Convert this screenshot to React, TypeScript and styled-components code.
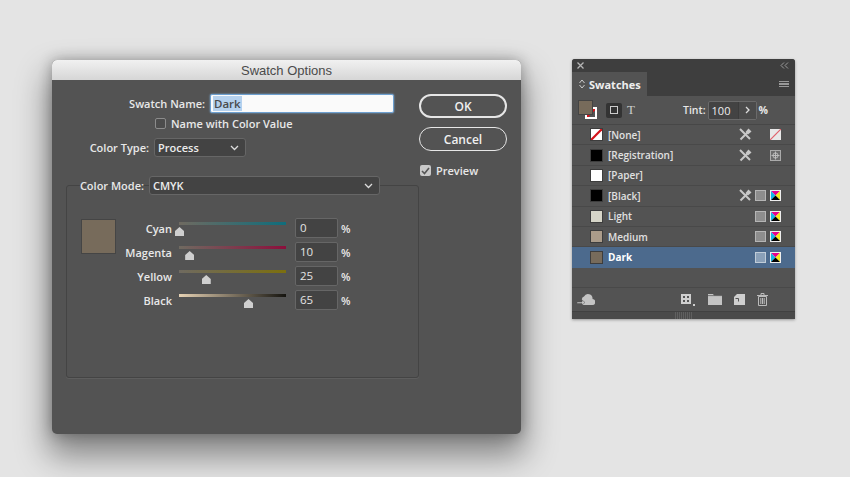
import styled, { createGlobalStyle } from 'styled-components';

const GlobalStyle = createGlobalStyle`
  html, body {
    margin: 0;
    height: 100%;
    background: #e4e4e4;
    overflow: hidden;
  }
  body {
    font-family: "Open Sans", "DejaVu Sans", sans-serif;
  }
`;

interface IChannel {
  name: string;
  value: number;
  thumb: number;
  track: string;
}

interface ISwatch {
  name: string;
  color: string;
  kind?: 'none' | 'plain';
  scissors?: boolean;
  mode?: 'none' | 'reg' | 'cmyk';
  spot?: boolean;
  selected?: boolean;
}

const channels: IChannel[] = [
  { name: 'Cyan', value: 0, thumb: 0, track: 'linear-gradient(90deg, #6f6a60, #0f6d7c)' },
  { name: 'Magenta', value: 10, thumb: 9.5, track: 'linear-gradient(90deg, #6f6a60, #8c0f3c)' },
  { name: 'Yellow', value: 25, thumb: 25, track: 'linear-gradient(90deg, #6f6a60, #7c6f0e)' },
  { name: 'Black', value: 65, thumb: 64.5, track: 'linear-gradient(90deg, #e6d2b4, #15140f)' },
];

const swatches: ISwatch[] = [
  { name: '[None]', color: '#fff', kind: 'none', scissors: true, mode: 'none' },
  { name: '[Registration]', color: '#000', scissors: true, mode: 'reg' },
  { name: '[Paper]', color: '#fff' },
  { name: '[Black]', color: '#000', scissors: true, spot: true, mode: 'cmyk' },
  { name: 'Light', color: '#d6d5c8', spot: true, mode: 'cmyk' },
  { name: 'Medium', color: '#ab9c8a', spot: true, mode: 'cmyk' },
  { name: 'Dark', color: '#776b5b', spot: true, mode: 'cmyk', selected: true },
];

const Chevron = () => (
  <svg width="9" height="6" viewBox="0 0 9 6">
    <path d="M1 1l3.5 3.5L8 1" fill="none" stroke="#ddd" strokeWidth="1.3" />
  </svg>
);

const ScissorsIcon = () => (
  <svg width="13" height="13" viewBox="0 0 13 13">
    <path d="M1 1l10 10M10 3L1.500 11.500" stroke="#c8c8c8" strokeWidth="2" fill="none" />
    <path d="M6.500 4l3-3.500 3 3-3.500 3z" fill="#c8c8c8" />
  </svg>
);

const CmykIcon = () => (
  <svg width="11" height="11" viewBox="0 0 11 11">
    <rect width="11" height="11" fill="#eee" />
    <path d="M1 1h9L5.500 5.500z" fill="#e5008c" />
    <path d="M1 1v9l4.500-4.500z" fill="#12b5e8" />
    <path d="M10 1v9L5.500 5.500z" fill="#f6ea1a" />
    <path d="M1 10h9L5.500 5.500z" fill="#000" />
  </svg>
);

const RegIcon = () => (
  <svg width="11" height="11" viewBox="0 0 11 11">
    <rect x="0.5" y="0.5" width="10" height="10" fill="#6a6a6a" stroke="#aaa" />
    <circle cx="5.500" cy="5.500" r="2.600" fill="none" stroke="#bbb" />
    <path d="M5.500 1.500v8M1.500 5.500h8" stroke="#bbb" />
  </svg>
);

const NoneIcon = () => (
  <svg width="11" height="11" viewBox="0 0 11 11">
    <rect width="11" height="11" fill="#e8e8e8" />
    <path d="M0 11L11 0" stroke="#e0606a" strokeWidth="1.200" />
  </svg>
);

const CloudIcon = () => (
  <svg width="18" height="14" viewBox="0 0 18 14">
    <path d="M6 12h9a3 3 0 0 0 .5-6A4.500 4.500 0 0 0 7 3.500 3 3 0 0 0 5 7z" fill="#c4c4c4" />
    <path d="M0 9h5V7l3 2.500L5 12v-1.500H0z" fill="#c4c4c4" stroke="#535353" strokeWidth="0.5" />
  </svg>
);

const GroupIcon = () => (
  <svg width="15" height="14" viewBox="0 0 15 14">
    <rect width="10" height="10" y="1" fill="#cfcfcf" />
    <path d="M2 3h2v2H2zM6 3h2v2H6zM2 7h2v2H2zM6 7h2v2H6z" fill="#555" />
    <rect x="12" y="11" width="2" height="2" fill="#cfcfcf" />
  </svg>
);

const FolderIcon = () => (
  <svg width="14" height="11" viewBox="0 0 14 11">
    <path d="M0 0h5l1 1.500h8V11H0z" fill="#c4c4c4" />
    <path d="M0 1.600h14" stroke="#555" strokeWidth="0.7" />
  </svg>
);

const NewIcon = () => (
  <svg width="11" height="11" viewBox="0 0 11 11">
    <path d="M3 0h8v11H0V3z" fill="#cfcfcf" />
    <path d="M1.500 4.500h3v3" fill="none" stroke="#555" />
  </svg>
);

const TrashIcon = () => (
  <svg width="11" height="13" viewBox="0 0 11 13">
    <path d="M0 2.500h11M4 2V.5h3V2" stroke="#bbb" fill="none" />
    <path d="M1.500 3.500h8V12.500h-8z" fill="none" stroke="#bbb" />
    <path d="M3.800 5v6M5.500 5v6M7.200 5v6" stroke="#bbb" />
  </svg>
);

const App = () => {
  return (
    <Page>
      <GlobalStyle />
      <Dialog>
        <TitleBar>Swatch Options</TitleBar>
        <DialogBody>
          <FormColumn>
            <NameRow>
              <Label>Swatch Name:</Label>
              <NameField>
                <Highlight>Dark</Highlight>
              </NameField>
            </NameRow>
            <CheckRow>
              <Checkbox />
              <Label>Name with Color Value</Label>
            </CheckRow>
            <TypeRow>
              <Label>Color Type:</Label>
              <Select $width={92}>
                Process
                <Chevron />
              </Select>
            </TypeRow>
            <GroupBox>
              <ModeRow>
                <Label>Color Mode:</Label>
                <Select $width={231}>
                  CMYK
                  <Chevron />
                </Select>
              </ModeRow>
              <MixArea>
                <BigSwatch />
                <Sliders>
                  {channels.map((c) => (
                    <SliderRow key={c.name}>
                      <SliderLabel>{c.name}</SliderLabel>
                      <Track $bg={c.track}>
                        <Thumb style={{ left: `${c.thumb}%` }} />
                      </Track>
                      <NumberField>{c.value}</NumberField>
                      <Label>%</Label>
                    </SliderRow>
                  ))}
                </Sliders>
              </MixArea>
            </GroupBox>
          </FormColumn>
          <ActionColumn>
            <PillButton $primary>OK</PillButton>
            <PillButton>Cancel</PillButton>
            <PreviewRow>
              <CheckedBox>
                <svg width="9" height="8" viewBox="0 0 9 8">
                  <path d="M1 4l2.500 2.500L8 1" fill="none" stroke="#555" strokeWidth="1.600" />
                </svg>
              </CheckedBox>
              <Label>Preview</Label>
            </PreviewRow>
          </ActionColumn>
        </DialogBody>
      </Dialog>

      <Panel>
        <PanelTop>
          <svg width="7" height="7" viewBox="0 0 7 7">
            <path d="M0.500 0.500l6 6M6.500 0.500l-6 6" stroke="#b5b5b5" strokeWidth="1.300" />
          </svg>
          <svg width="9" height="7" viewBox="0 0 9 7">
            <path d="M4 0.500L1 3.500l3 3M8 0.500L5 3.500l3 3" fill="none" stroke="#999" />
          </svg>
        </PanelTop>
        <TabBar>
          <Tab>
            <svg width="6" height="10" viewBox="0 0 6 10">
              <path d="M0.500 4L3 1l2.500 3M0.500 6L3 9l2.500-3" fill="none" stroke="#ccc" />
            </svg>
            Swatches
          </Tab>
          <MenuIcon>
            <span />
            <span />
            <span />
          </MenuIcon>
        </TabBar>
        <TintRow>
          <FillStroke>
            <FillChip />
            <StrokeChip />
          </FillStroke>
          <StrokeToggle>
            <span />
          </StrokeToggle>
          <TypeGlyph>T</TypeGlyph>
          <TintLabel>Tint:</TintLabel>
          <TintField>
            <span>100</span>
            <TintStep>
              <svg width="5" height="8" viewBox="0 0 5 8">
                <path d="M1 1l3 3-3 3" fill="none" stroke="#ddd" strokeWidth="1.300" />
              </svg>
            </TintStep>
          </TintField>
          <PercentLabel>%</PercentLabel>
        </TintRow>
        <SwatchList>
          {swatches.map((s) => (
            <SwatchRow key={s.name} $selected={s.selected}>
              <Chip $color={s.color}>
                {s.kind === 'none' && (
                  <svg width="11" height="11" viewBox="0 0 11 11">
                    <path d="M0 11L11 0" stroke="#d3121a" strokeWidth="2.200" />
                  </svg>
                )}
              </Chip>
              <SwatchName $selected={s.selected}>{s.name}</SwatchName>
              <IconSlots>
                <Slot>{s.scissors && <ScissorsIcon />}</Slot>
                <Slot>{s.spot && <SpotSquare $selected={s.selected} />}</Slot>
                <Slot>
                  {s.mode === 'cmyk' && <CmykIcon />}
                  {s.mode === 'reg' && <RegIcon />}
                  {s.mode === 'none' && <NoneIcon />}
                </Slot>
              </IconSlots>
            </SwatchRow>
          ))}
        </SwatchList>
        <PanelFooter>
          <CloudIcon />
          <FooterTools>
            <GroupIcon />
            <FolderIcon />
            <NewIcon />
            <TrashIcon />
          </FooterTools>
        </PanelFooter>
        <ResizeBar>
          <Grip />
        </ResizeBar>
      </Panel>
    </Page>
  );
};

export default App;

const Page = styled.div`
  display: flex;
  align-items: flex-start;
  gap: 51px;
  padding: 59px 0 0 52px;
  height: 477px;
  box-sizing: border-box;
  overflow: hidden;
`;

const Dialog = styled.div`
  width: 469px;
  height: 374px;
  margin-top: 1px;
  border-radius: 5px;
  background: #535353;
  box-shadow: 0 18px 32px 4px rgba(0, 0, 0, 0.42), 0 0 14px rgba(0, 0, 0, 0.3);
  display: flex;
  flex-direction: column;
  overflow: hidden;
  flex-shrink: 0;
`;

const TitleBar = styled.div`
  height: 20px;
  line-height: 21px;
  text-align: center;
  font-family: "Liberation Sans", Arial, sans-serif;
  font-size: 13px;
  color: #4a4a4a;
  background: linear-gradient(#f1f1f1, #d6d6d6);
`;

const DialogBody = styled.div`
  display: flex;
  flex: 1;
  padding: 14px 14px 0 14px;
`;

const FormColumn = styled.div`
  width: 353px;
  display: flex;
  flex-direction: column;
`;

const Label = styled.span`
  font-size: 11px;
  font-weight: 600;
  color: #e8e8e8;
  white-space: nowrap;
`;

const NameRow = styled.div`
  display: flex;
  align-items: center;
  justify-content: flex-end;
  gap: 5px;
  width: 328px;
  height: 19px;
`;

const NameField = styled.div`
  width: 184px;
  height: 19px;
  box-sizing: border-box;
  padding: 1px 2px;
  background: #fafafa;
  border: 1px solid #6d9fcf;
  box-shadow: 0 0 2px #7fb2e0;
  border-radius: 2px;
  font-size: 11.500px;
  color: #4a4a4a;
  line-height: 15px;
`;

const Highlight = styled.span`
  background: #b5d1ee;
  padding: 0 1px;
  font-weight: 600;
`;

const CheckRow = styled.div`
  display: flex;
  align-items: center;
  gap: 5px;
  height: 11px;
  margin: 5px 0 0 89px;
`;

const Checkbox = styled.span`
  width: 11px;
  height: 11px;
  box-sizing: border-box;
  border: 1px solid #8c8c8c;
  border-radius: 2px;
  background: #4c4c4c;
`;

const TypeRow = styled.div`
  display: flex;
  align-items: center;
  justify-content: flex-end;
  gap: 5px;
  width: 180px;
  margin-top: 9px;
`;

const Select = styled.div<{ $width: number }>`
  width: ${(p) => p.$width}px;
  height: 19px;
  box-sizing: border-box;
  padding: 0 6px 0 3px;
  display: flex;
  align-items: center;
  justify-content: space-between;
  background: #434343;
  border: 1px solid #666;
  border-radius: 3px;
  font-size: 11px;
  font-weight: 600;
  color: #ececec;
`;

const GroupBox = styled.div`
  margin-top: 28px;
  height: 193px;
  box-sizing: border-box;
  border: 1px solid #444;
  border-radius: 3px;
  box-shadow: 0 1px 0 #5e5e5e;
`;

const ModeRow = styled.div`
  display: flex;
  align-items: center;
  justify-content: flex-end;
  gap: 5px;
  width: 313px;
  margin-top: -10px;
`;

const MixArea = styled.div`
  display: flex;
  padding: 24px 0 0 14px;
`;

const BigSwatch = styled.div`
  width: 35px;
  height: 35px;
  background: #776b5b;
  border: 1px solid #454545;
  box-sizing: border-box;
`;

const Sliders = styled.div`
  display: flex;
  flex-direction: column;
  gap: 4px;
  margin-top: -1px;
`;

const SliderRow = styled.div`
  display: flex;
  align-items: center;
  height: 20px;
`;

const SliderLabel = styled(Label)`
  width: 56px;
  text-align: right;
`;

const Track = styled.div<{ $bg: string }>`
  position: relative;
  width: 107px;
  height: 3px;
  margin: -9px 9px 0 7px;
  background: ${(p) => p.$bg};
`;

const Thumb = styled.span`
  position: absolute;
  top: 5px;
  width: 9px;
  height: 9px;
  margin-left: -4px;
  background: #cfcfcf;
  clip-path: polygon(50% 0, 100% 45%, 100% 100%, 0 100%, 0 45%);
`;

const NumberField = styled.div`
  width: 43px;
  height: 20px;
  margin-right: 3px;
  box-sizing: border-box;
  padding-left: 4px;
  background: #434343;
  border: 1px solid #666;
  border-radius: 2px;
  font-size: 11.500px;
  line-height: 18px;
  color: #e4e4e4;
`;

const ActionColumn = styled.div`
  display: flex;
  flex-direction: column;
  gap: 9px;
  width: 88px;
`;

const PillButton = styled.div<{ $primary?: boolean }>`
  height: 24px;
  box-sizing: border-box;
  border: ${(p) => (p.$primary ? '2px' : '1px')} solid #e6e6e6;
  border-radius: 12px;
  display: flex;
  align-items: center;
  justify-content: center;
  font-size: 12px;
  font-weight: 600;
  color: #f0f0f0;
`;

const PreviewRow = styled.div`
  display: flex;
  align-items: center;
  gap: 5px;
  margin: 3px 0 0 1px;
`;

const CheckedBox = styled.span`
  width: 11px;
  height: 11px;
  border-radius: 2px;
  background: #c8c8c8;
  display: flex;
  align-items: center;
  justify-content: center;
`;

const Panel = styled.div`
  width: 223px;
  height: 260px;
  flex-shrink: 0;
  background: #535353;
  border-radius: 3px 3px 0 0;
  box-shadow: 0 1px 3px rgba(0, 0, 0, 0.35);
  display: flex;
  flex-direction: column;
  overflow: hidden;
`;

const PanelTop = styled.div`
  height: 13px;
  flex-shrink: 0;
  padding: 0 6px 0 5px;
  display: flex;
  align-items: center;
  justify-content: space-between;
  background: #3e3e3e;
`;

const TabBar = styled.div`
  height: 24px;
  flex-shrink: 0;
  display: flex;
  align-items: center;
  justify-content: space-between;
  background: #3e3e3e;
  padding-right: 6px;
`;

const Tab = styled.div`
  width: 75px;
  height: 100%;
  box-sizing: border-box;
  padding-left: 7px;
  display: flex;
  align-items: center;
  gap: 4px;
  background: #535353;
  font-size: 11px;
  font-weight: 700;
  color: #eee;
`;

const MenuIcon = styled.div`
  display: flex;
  flex-direction: column;
  gap: 1px;

  span {
    width: 10px;
    height: 1.500px;
    background: #999;
  }
`;

const TintRow = styled.div`
  height: 29px;
  flex-shrink: 0;
  display: flex;
  align-items: center;
  padding-left: 6px;
  box-sizing: border-box;
  border-bottom: 1px solid #474747;
`;

const FillStroke = styled.div`
  position: relative;
  width: 20px;
  height: 20px;
`;

const FillChip = styled.span`
  position: absolute;
  z-index: 1;
  left: 0;
  top: 0;
  width: 13px;
  height: 13px;
  background: #776b5b;
  border: 1px solid #444;
`;

const StrokeChip = styled.span`
  position: absolute;
  left: 7px;
  top: 7px;
  width: 12px;
  height: 12px;
  box-sizing: border-box;
  border: 2px solid #fff;
  background: linear-gradient(135deg, #535353 42%, #d3121a 42%, #d3121a 62%, #535353 62%);
`;

const StrokeToggle = styled.div`
  width: 16px;
  height: 15px;
  margin-left: 8px;
  background: #333;
  border-radius: 2px;
  display: flex;
  align-items: center;
  justify-content: center;

  span {
    width: 6px;
    height: 6px;
    border: 1px solid #ccc;
  }
`;

const TypeGlyph = styled.span`
  width: 18px;
  text-align: center;
  font-family: "Liberation Serif", serif;
  font-size: 13px;
  color: #ccc;
`;

const TintLabel = styled.span`
  margin-left: 43px;
  margin-right: 2px;
  font-size: 10.500px;
  font-weight: 600;
  color: #e8e8e8;
`;

const PercentLabel = styled.span`
  margin-left: 2px;
  font-size: 10.500px;
  font-weight: 700;
  color: #e8e8e8;
`;

const TintField = styled.div`
  width: 49px;
  height: 19px;
  box-sizing: border-box;
  display: flex;
  justify-content: space-between;
  align-items: stretch;
  border: 1px solid #6a6a6a;
  border-radius: 2px;
  background: #434343;
  font-size: 11px;
  line-height: 17px;
  color: #eee;

  span {
    padding-left: 3px;
  }
`;

const TintStep = styled.div`
  width: 17px;
  display: flex;
  align-items: center;
  justify-content: center;
  background: #4b4b4b;
  border-left: 1px solid #3c3c3c;
`;

const SwatchList = styled.div`
  display: flex;
  flex-direction: column;
`;

const SwatchRow = styled.div<{ $selected?: boolean }>`
  height: 20.400px;
  flex-shrink: 0;
  box-sizing: border-box;
  display: flex;
  align-items: center;
  padding: 0 12px 0 19px;
  background: ${(p) => (p.$selected ? '#4c6a8d' : 'transparent')};
  border-bottom: 1px solid ${(p) => (p.$selected ? '#4c6a8d' : '#494949')};
`;

const Chip = styled.span<{ $color: string }>`
  width: 11px;
  height: 11px;
  display: block;
  background: ${(p) => p.$color};
  outline: 1px solid #3d3d3d;

  svg {
    display: block;
  }
`;

const SwatchName = styled.span<{ $selected?: boolean }>`
  margin-left: 6px;
  font-size: 10px;
  font-weight: ${(p) => (p.$selected ? 700 : 600)};
  color: ${(p) => (p.$selected ? '#fff' : '#e0e0e0')};
`;

const IconSlots = styled.div`
  margin-left: auto;
  display: flex;
  align-items: center;
`;

const Slot = styled.span`
  width: 15px;
  height: 13px;
  display: flex;
  align-items: center;
  justify-content: center;
`;

const SpotSquare = styled.span<{ $selected?: boolean }>`
  width: 9px;
  height: 9px;
  background: ${(p) => (p.$selected ? '#8aa0b8' : '#8d8d8d')};
  border: 1px solid ${(p) => (p.$selected ? '#c0ccd8' : '#b5b5b5')};
`;

const PanelFooter = styled.div`
  margin-top: auto;
  height: 24px;
  flex-shrink: 0;
  box-sizing: border-box;
  padding: 0 27px 0 5px;
  display: flex;
  align-items: center;
  justify-content: space-between;
  border-top: 1px solid #494949;
`;

const FooterTools = styled.div`
  display: flex;
  align-items: center;
  gap: 12px;
`;

const ResizeBar = styled.div`
  height: 8px;
  flex-shrink: 0;
  display: flex;
  justify-content: center;
  background: #4a4a4a;
  border-top: 1px solid #414141;
  box-sizing: border-box;
`;

const Grip = styled.span`
  width: 18px;
  height: 7px;
  background: repeating-linear-gradient(90deg, #5f5f5f 0 1px, #4a4a4a 1px 2px);
`;
